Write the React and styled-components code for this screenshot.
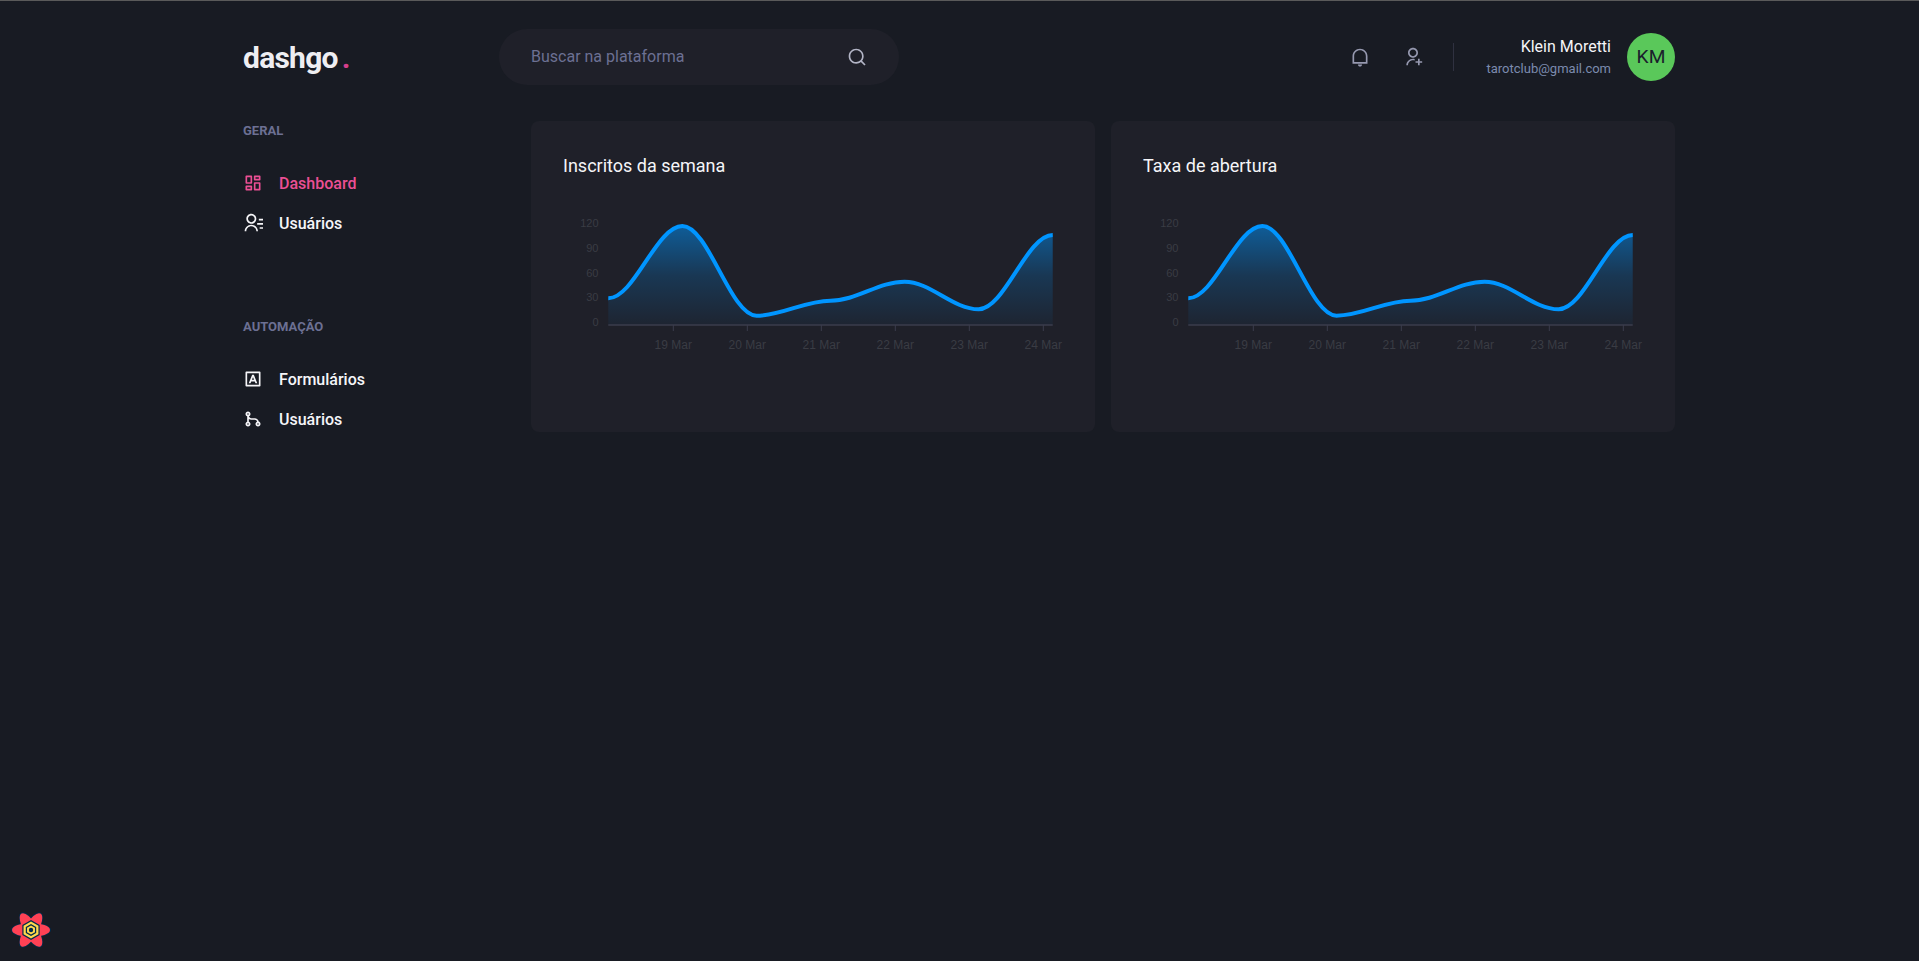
import React from "react";
import styled, { createGlobalStyle } from "styled-components";
import {
  RiContactsLine,
  RiDashboardLine,
  RiGitMergeLine,
  RiInputMethodLine,
  RiNotificationLine,
  RiSearchLine,
  RiUserAddLine,
} from "react-icons/ri";

const GlobalStyle = createGlobalStyle`
  * { box-sizing: border-box; }
  html, body { margin: 0; height: 100%; }
  body {
    background: #181b23;
    border-top: 1px solid #5a5a5a;
    color: #eeeef2;
    font-family: Roboto, "Liberation Sans", sans-serif;
    font-size: 16px;
    line-height: 1.5;
  }
`;

const Wrapper = styled.div`
  width: 100%;
  max-width: 1480px;
  margin: 0 auto;
  padding: 0 24.5px 0 23.5px;
`;

const Header = styled.header`
  display: flex;
  align-items: center;
  height: 80px;
  margin-top: 16px;
`;

const Logo = styled.div`
  width: 256px;
  font-size: 30px;
  font-weight: 700;
  letter-spacing: -0.75px;
  span {
    margin-left: 4px;
    color: #d53f8c;
  }
`;

const SearchBox = styled.label`
  display: flex;
  align-items: center;
  width: 400px;
  height: 56px;
  padding: 0 32px;
  border-radius: 28px;
  background: #1f2029;
  color: #b3b5c6;
  input {
    flex: 1;
    min-width: 0;
    border: 0;
    outline: 0;
    padding: 0;
    background: transparent;
    color: #eeeef2;
    font: inherit;
  }
  input::placeholder {
    color: #6c7093;
    opacity: 1;
  }
`;

const HeaderRight = styled.div`
  display: flex;
  align-items: center;
  margin-left: auto;
`;

const IconGroup = styled.div`
  display: flex;
  align-items: center;
  gap: 33px;
  height: 28px;
  padding-right: 30px;
  border-right: 1px solid #2f3140;
  color: #9699b0;
`;

const Profile = styled.div`
  display: flex;
  align-items: center;
  margin-left: 32px;
`;

const ProfileText = styled.div`
  margin-right: 16px;
  text-align: right;
`;

const ProfileName = styled.div`
  font-size: 16px;
  line-height: 24px;
  color: #f5f5f8;
`;

const ProfileEmail = styled.div`
  font-size: 13px;
  line-height: 20px;
  color: #7c8bae;
`;

const Avatar = styled.div`
  display: flex;
  align-items: center;
  justify-content: center;
  width: 48px;
  height: 48px;
  border-radius: 50%;
  background: #5ac85a;
  color: #1a202c;
  font-size: 19.2px;
`;

const Body = styled.div`
  display: flex;
  margin-top: 24px;
`;

const Sidebar = styled.aside`
  flex: none;
  width: 256px;
  margin-right: 32px;
  padding-top: 1px;
`;

const NavSection = styled.section`
  & + & {
    margin-top: 82px;
  }
`;

const NavTitle = styled.div`
  font-size: 13px;
  font-weight: 700;
  line-height: 18px;
  color: #6c7093;
`;

const NavList = styled.nav`
  display: flex;
  flex-direction: column;
  gap: 16px;
  margin-top: 32px;
`;

const NavItem = styled.a`
  display: flex;
  align-items: center;
  gap: 16px;
  height: 24px;
  font-weight: 500;
  color: ${(p) => (p.$active ? "#ec4f94" : "#f5f5f8")};
  svg {
    flex: none;
    margin-top: -3px;
  }
`;

const Main = styled.main`
  flex: 1;
  display: grid;
  grid-template-columns: 1fr 1fr;
  gap: 16px;
  align-items: start;
`;

const Card = styled.div`
  height: 311px;
  padding: 32px;
  border-radius: 8px;
  background: #1f2029;
`;

const CardTitle = styled.div`
  margin-bottom: 2px;
  font-size: 18px;
  line-height: 25px;
  color: #f5f5f8;
`;

const ChartSvg = styled.svg`
  display: block;
  overflow: visible;
  text {
    font-family: "Liberation Sans", Arial, sans-serif;
    fill: #3a3c44;
  }
`;

const FlowerButton = styled.div`
  position: fixed;
  left: 11px;
  bottom: 11px;
  width: 40px;
  height: 40px;
`;

// values read off the picture, in chart pixels
const baseline = 145;
const ys = [118.3, 46, 135.7, 120.7, 101.7, 129.3, 55];
const xs = ys.map((_, i) => 45.3 + i * 74.07);
const ticks = ["19 Mar", "20 Mar", "21 Mar", "22 Mar", "23 Mar", "24 Mar"];
const yLabels = [
  ["120", 43.3],
  ["90", 67.7],
  ["60", 92.7],
  ["30", 117.3],
  ["0", 142.3],
];

const linePath = ys.reduce((d, y, i) => {
  if (i === 0) return `M${xs[0]} ${y}`;
  const dx = (xs[i] - xs[i - 1]) * 0.35;
  return `${d} C${xs[i - 1] + dx} ${ys[i - 1]} ${xs[i] - dx} ${y} ${xs[i]} ${y}`;
}, "");

const Chart = ({ id }) => (
  <ChartSvg width="500" height="219" viewBox="0 0 500 219">
    <defs>
      <linearGradient id={id} x1="0" y1="0" x2="0" y2="1">
        <stop offset="0" stopColor="#0095ff" stopOpacity="0.52" />
        <stop offset="0.5" stopColor="#0095ff" stopOpacity="0.2" />
        <stop offset="1" stopColor="#0095ff" stopOpacity="0.04" />
      </linearGradient>
    </defs>
    <path
      d={`${linePath} L${xs[6]} ${baseline} L${xs[0]} ${baseline} Z`}
      fill={`url(#${id})`}
    />
    <path d={linePath} fill="none" stroke="#0095ff" strokeWidth="4" />
    <line x1={xs[0]} x2={xs[6]} y1={baseline} y2={baseline} stroke="#3b3d4d" strokeWidth="1.5" />
    {ticks.map((t, i) => {
      const x = 110.3 + i * 74;
      return (
        <g key={t}>
          <line x1={x} x2={x} y1={baseline} y2={baseline + 6} stroke="#3b3d4d" />
          <text x={x} y={baseline + 24} fontSize="12" textAnchor="middle">
            {t}
          </text>
        </g>
      );
    })}
    {yLabels.map(([t, y]) => (
      <text key={t} x="35.5" y={y + 4} fontSize="11" textAnchor="end">
        {t}
      </text>
    ))}
  </ChartSvg>
);

const hexagon = (r) =>
  [0, 1, 2, 3, 4, 5]
    .map((i) => {
      const a = (Math.PI / 3) * i - Math.PI / 2;
      return `${20 + r * Math.cos(a)},${20 + r * Math.sin(a)}`;
    })
    .join(" ");

const Flower = () => (
  <svg width="40" height="40" viewBox="0 0 40 40" style={{ overflow: "visible" }}>
    {[0, 60, 120].map((a) => (
      <ellipse
        key={a}
        cx="20"
        cy="20"
        rx="20"
        ry="7.8"
        fill="#002c4b"
        transform={`rotate(${a} 20 20)`}
      />
    ))}
    {[0, 60, 120].map((a) => (
      <ellipse
        key={a}
        cx="20"
        cy="20"
        rx="19"
        ry="7"
        fill="#ff4154"
        transform={`rotate(${a} 20 20)`}
      />
    ))}
    <polygon points={hexagon(10)} fill="#002c4b" />
    <polygon points={hexagon(8.6)} fill="#ffd94c" />
    <polygon points={hexagon(6)} fill="#002c4b" />
    <polygon points={hexagon(4.6)} fill="#ffd94c" />
    <circle cx="20" cy="20" r="2.2" fill="#002c4b" />
  </svg>
);

export default function App() {
  return (
    <>
      <GlobalStyle />
      <Wrapper>
        <Header>
          <Logo>
            dashgo<span>.</span>
          </Logo>
          <SearchBox>
            <input placeholder="Buscar na plataforma" />
            <RiSearchLine size={20} />
          </SearchBox>
          <HeaderRight>
            <IconGroup>
              <RiNotificationLine size={20} />
              <RiUserAddLine size={20} />
            </IconGroup>
            <Profile>
              <ProfileText>
                <ProfileName>Klein Moretti</ProfileName>
                <ProfileEmail>tarotclub@gmail.com</ProfileEmail>
              </ProfileText>
              <Avatar>KM</Avatar>
            </Profile>
          </HeaderRight>
        </Header>
        <Body>
          <Sidebar>
            <NavSection>
              <NavTitle>GERAL</NavTitle>
              <NavList>
                <NavItem $active>
                  <RiDashboardLine size={20} />
                  Dashboard
                </NavItem>
                <NavItem>
                  <RiContactsLine size={20} />
                  Usuários
                </NavItem>
              </NavList>
            </NavSection>
            <NavSection>
              <NavTitle>AUTOMAÇÃO</NavTitle>
              <NavList>
                <NavItem>
                  <RiInputMethodLine size={20} />
                  Formulários
                </NavItem>
                <NavItem>
                  <RiGitMergeLine size={20} />
                  Usuários
                </NavItem>
              </NavList>
            </NavSection>
          </Sidebar>
          <Main>
            <Card>
              <CardTitle>Inscritos da semana</CardTitle>
              <Chart id="fill-a" />
            </Card>
            <Card>
              <CardTitle>Taxa de abertura</CardTitle>
              <Chart id="fill-b" />
            </Card>
          </Main>
        </Body>
      </Wrapper>
      <FlowerButton>
        <Flower />
      </FlowerButton>
    </>
  );
}
